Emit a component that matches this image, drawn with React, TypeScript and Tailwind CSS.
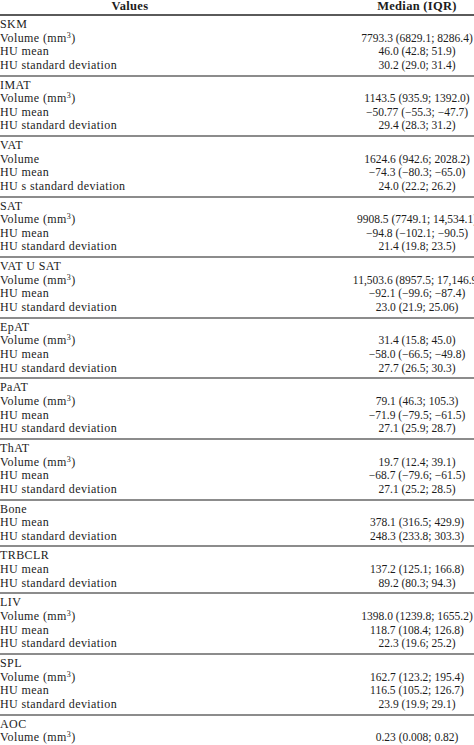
import React from "react";

type Row = { label: React.ReactNode; value: string };
type Group = { name: string; rows: Row[] };

const Vol = () => (
  <>
    Volume (mm<span className="relative -top-[4px] text-[8px] leading-none">3</span>)
  </>
);

const groups: Group[] = [
  {
    name: "SKM",
    rows: [
      { label: <Vol />, value: "7793.3 (6829.1; 8286.4)" },
      { label: "HU mean", value: "46.0 (42.8; 51.9)" },
      { label: "HU standard deviation", value: "30.2 (29.0; 31.4)" },
    ],
  },
  {
    name: "IMAT",
    rows: [
      { label: <Vol />, value: "1143.5 (935.9; 1392.0)" },
      { label: "HU mean", value: "\u221250.77 (\u221255.3; \u221247.7)" },
      { label: "HU standard deviation", value: "29.4 (28.3; 31.2)" },
    ],
  },
  {
    name: "VAT",
    rows: [
      { label: "Volume", value: "1624.6 (942.6; 2028.2)" },
      { label: "HU mean", value: "\u221274.3 (\u221280.3; \u221265.0)" },
      { label: "HU s standard deviation", value: "24.0 (22.2; 26.2)" },
    ],
  },
  {
    name: "SAT",
    rows: [
      { label: <Vol />, value: "9908.5 (7749.1; 14,534.1)" },
      { label: "HU mean", value: "\u221294.8 (\u2212102.1; \u221290.5)" },
      { label: "HU standard deviation", value: "21.4 (19.8; 23.5)" },
    ],
  },
  {
    name: "VAT U SAT",
    rows: [
      { label: <Vol />, value: "11,503.6 (8957.5; 17,146.9)" },
      { label: "HU mean", value: "\u221292.1 (\u221299.6; \u221287.4)" },
      { label: "HU standard deviation", value: "23.0 (21.9; 25.06)" },
    ],
  },
  {
    name: "EpAT",
    rows: [
      { label: <Vol />, value: "31.4 (15.8; 45.0)" },
      { label: "HU mean", value: "\u221258.0 (\u221266.5; \u221249.8)" },
      { label: "HU standard deviation", value: "27.7 (26.5; 30.3)" },
    ],
  },
  {
    name: "PaAT",
    rows: [
      { label: <Vol />, value: "79.1 (46.3; 105.3)" },
      { label: "HU mean", value: "\u221271.9 (\u221279.5; \u221261.5)" },
      { label: "HU standard deviation", value: "27.1 (25.9; 28.7)" },
    ],
  },
  {
    name: "ThAT",
    rows: [
      { label: <Vol />, value: "19.7 (12.4; 39.1)" },
      { label: "HU mean", value: "\u221268.7 (\u221279.6; \u221261.5)" },
      { label: "HU standard deviation", value: "27.1 (25.2; 28.5)" },
    ],
  },
  {
    name: "Bone",
    rows: [
      { label: "HU mean", value: "378.1 (316.5; 429.9)" },
      { label: "HU standard deviation", value: "248.3 (233.8; 303.3)" },
    ],
  },
  {
    name: "TRBCLR",
    rows: [
      { label: "HU mean", value: "137.2 (125.1; 166.8)" },
      { label: "HU standard deviation", value: "89.2 (80.3; 94.3)" },
    ],
  },
  {
    name: "LIV",
    rows: [
      { label: <Vol />, value: "1398.0 (1239.8; 1655.2)" },
      { label: "HU mean", value: "118.7 (108.4; 126.8)" },
      { label: "HU standard deviation", value: "22.3 (19.6; 25.2)" },
    ],
  },
  {
    name: "SPL",
    rows: [
      { label: <Vol />, value: "162.7 (123.2; 195.4)" },
      { label: "HU mean", value: "116.5 (105.2; 126.7)" },
      { label: "HU standard deviation", value: "23.9 (19.9; 29.1)" },
    ],
  },
  {
    name: "AOC",
    rows: [{ label: <Vol />, value: "0.23 (0.008; 0.82)" }],
  },
];

function TableRow({ label, value }: { label: React.ReactNode; value?: string }) {
  return (
    <div className="flex h-[13.6px] items-center">
      <div className="min-w-0 flex-1 whitespace-nowrap text-[12px] tracking-[0.4px]">{label}</div>
      {value !== undefined && (
        <div className="flex w-[114px] shrink-0 justify-center">
          <span className="shrink-0 whitespace-nowrap text-[11.5px]">{value}</span>
        </div>
      )}
    </div>
  );
}

export default function App() {
  return (
    <div
      className="w-[474px] h-[745px] overflow-hidden bg-white text-[#1c1c1c] leading-[13.6px]"
      style={{ fontFamily: '"Liberation Serif", "Times New Roman", serif' }}
    >
      {/* Header */}
      <div className="flex h-[14px] items-center text-[12.5px] font-bold tracking-[0.3px]">
        <div className="w-[260px] text-center">Values</div>
        <div className="flex-1" />
        <div className="flex w-[114px] shrink-0 justify-center whitespace-nowrap">Median (IQR)</div>
      </div>
      <div className="h-[2px] bg-[#5a5a5a]" />

      {groups.map((g, i) => (
        <div key={g.name}>
          <div className="pt-[2px] pb-[2.2px]">
            <TableRow label={g.name} />
            {g.rows.map((r, j) => (
              <TableRow key={j} label={r.label} value={r.value} />
            ))}
          </div>
          {i < groups.length - 1 && <div className="h-[2px] bg-[#8c8c8c]" />}
        </div>
      ))}
    </div>
  );
}
